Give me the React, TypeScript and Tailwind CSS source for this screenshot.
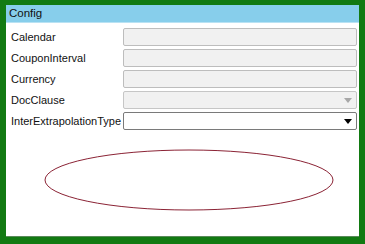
import React from "react";

const rows = [
  { label: "Calendar", kind: "text" },
  { label: "CouponInterval", kind: "text" },
  { label: "Currency", kind: "text" },
  { label: "DocClause", kind: "disabledSelect" },
  { label: "InterExtrapolationType", kind: "select" },
];

export default function App() {
  return (
    <div
      className="w-[365px] h-[244px] bg-[#127a12] flex flex-col pt-[5px] pl-[6px] pr-[6px] pb-[7px]"
      style={{ fontFamily: "Tahoma, 'Liberation Sans', sans-serif" }}
    >
      <div className="flex-1 bg-white flex flex-col border-b border-[#5a8a5a]">
        <div className="h-[18px] bg-[#87ceeb] flex items-center pl-[3px] text-[11.5px] text-[#111] border-b border-[#b9e2f3]">
          Config
        </div>
        <div className="flex flex-col gap-[3px] pt-[5px] pl-[5px] pr-[2px]">
          {rows.map((r) => (
            <div key={r.label} className="flex items-center h-[18px]">
              <div className="w-[112px] text-[11px] text-[#111] whitespace-nowrap">{r.label}</div>
              {r.kind === "text" && (
                <div className="flex-1 h-[18px] rounded-[2px] border border-[#bdbdbd] bg-[#f1f1f1]" />
              )}
              {r.kind === "disabledSelect" && (
                <div className="flex-1 h-[18px] rounded-[2px] border border-[#c6c6c6] bg-[#f1f1f1] flex items-center justify-end pr-[4px]">
                  <svg width="8" height="5" viewBox="0 0 8 5"><path d="M0 0h8L4 5z" fill="#a8a8a8" /></svg>
                </div>
              )}
              {r.kind === "select" && (
                <div className="flex-1 h-[18px] rounded-[2px] border border-[#7a7a7a] bg-white flex items-center justify-end pr-[4px]">
                  <svg width="8" height="5" viewBox="0 0 8 5"><path d="M0 0h8L4 5z" fill="#000" /></svg>
                </div>
              )}
            </div>
          ))}
        </div>
        <div className="flex-1 relative">
          <svg className="absolute left-0 top-0" width="353" height="110">
            <ellipse cx="183" cy="50" rx="144" ry="30" fill="none" stroke="#8b2335" strokeWidth="1" />
          </svg>
        </div>
      </div>
    </div>
  );
}
